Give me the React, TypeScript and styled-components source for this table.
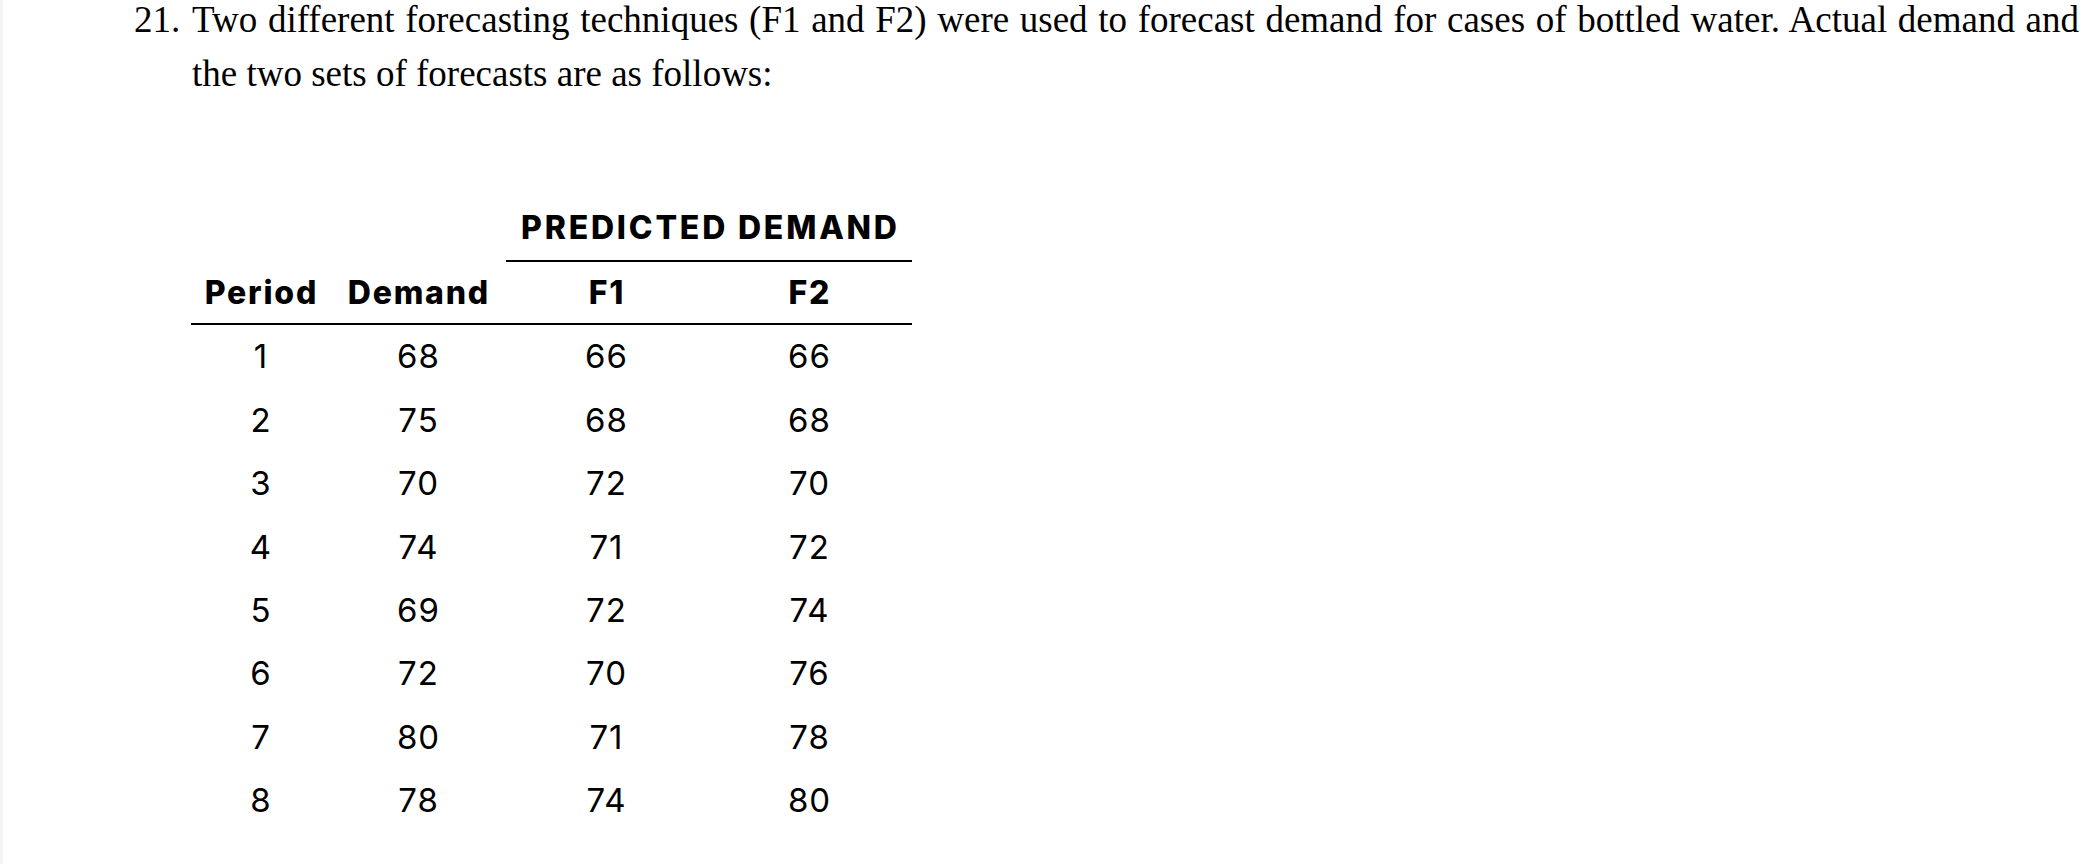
import React from "react";
import styled, { createGlobalStyle } from "styled-components";

const GlobalStyle = createGlobalStyle`
  html, body {
    margin: 0;
    padding: 0;
    background: #ffffff;
  }
  body {
    font-family: "Liberation Serif", "Times New Roman", serif;
    color: #000000;
  }
`;

const Page = styled.main`
  box-sizing: border-box;
  width: 2100px;
  height: 864px;
  overflow: hidden;
  border-left: 3px solid #f4f4f4;
  padding-left: 131px;
`;

const Question = styled.div`
  display: grid;
  grid-template-columns: 58px 1887px;
  margin-top: -7px;
  font-family: "Liberation Serif", "Times New Roman", serif;
  font-size: 37px;
  line-height: 53.6px;
  color: #000000;
`;

const Number = styled.span`
  white-space: nowrap;
`;

const Prose = styled.p`
  margin: 0;
  text-align: justify;
`;

const Table = styled.div`
  display: grid;
  grid-template-columns: 139px 176px 200px 206px;
  width: 721px;
  margin-top: 96px;
  margin-left: 57px;
  font-family: Inter, "Liberation Sans", sans-serif;
  color: #000000;
`;

const Spacer = styled.div`
  grid-column: 1 / span 2;
`;

const GroupHead = styled.div`
  grid-column: 3 / span 2;
  height: 64px;
  display: flex;
  align-items: center;
  justify-content: center;
  border-bottom: 2px solid #000000;
  font-size: 32px;
  font-weight: 800;
  letter-spacing: 2.8px;
  padding-left: 2.8px;
  line-height: 1;
`;

const HeadCell = styled.div`
  height: 61px;
  display: flex;
  align-items: center;
  justify-content: center;
  border-bottom: 2px solid #000000;
  font-size: 32px;
  font-weight: 800;
  letter-spacing: 1.8px;
  padding-left: 1.8px;
  line-height: 1;
`;

const Cell = styled.div`
  height: 63.4px;
  display: flex;
  align-items: center;
  justify-content: center;
  font-size: 33px;
  font-weight: 400;
  letter-spacing: 1px;
  padding-left: 1px;
  line-height: 1;
`;

const rows: [number, number, number, number][] = [
  [1, 68, 66, 66],
  [2, 75, 68, 68],
  [3, 70, 72, 70],
  [4, 74, 71, 72],
  [5, 69, 72, 74],
  [6, 72, 70, 76],
  [7, 80, 71, 78],
  [8, 78, 74, 80],
];

export default function App() {
  return (
    <>
      <GlobalStyle />
      <Page>
        <Question>
          <Number>21.</Number>
          <Prose>
            Two different forecasting techniques (F1 and F2) were used to forecast demand for cases of bottled water. Actual demand and the two sets of forecasts are as follows:
          </Prose>
        </Question>
        <Table>
          <Spacer />
          <GroupHead>PREDICTED DEMAND</GroupHead>
          <HeadCell>Period</HeadCell>
          <HeadCell>Demand</HeadCell>
          <HeadCell>F1</HeadCell>
          <HeadCell>F2</HeadCell>
          {rows.map((r) =>
            r.map((v, i) => <Cell key={`${r[0]}-${i}`}>{v}</Cell>)
          )}
        </Table>
      </Page>
    </>
  );
}
